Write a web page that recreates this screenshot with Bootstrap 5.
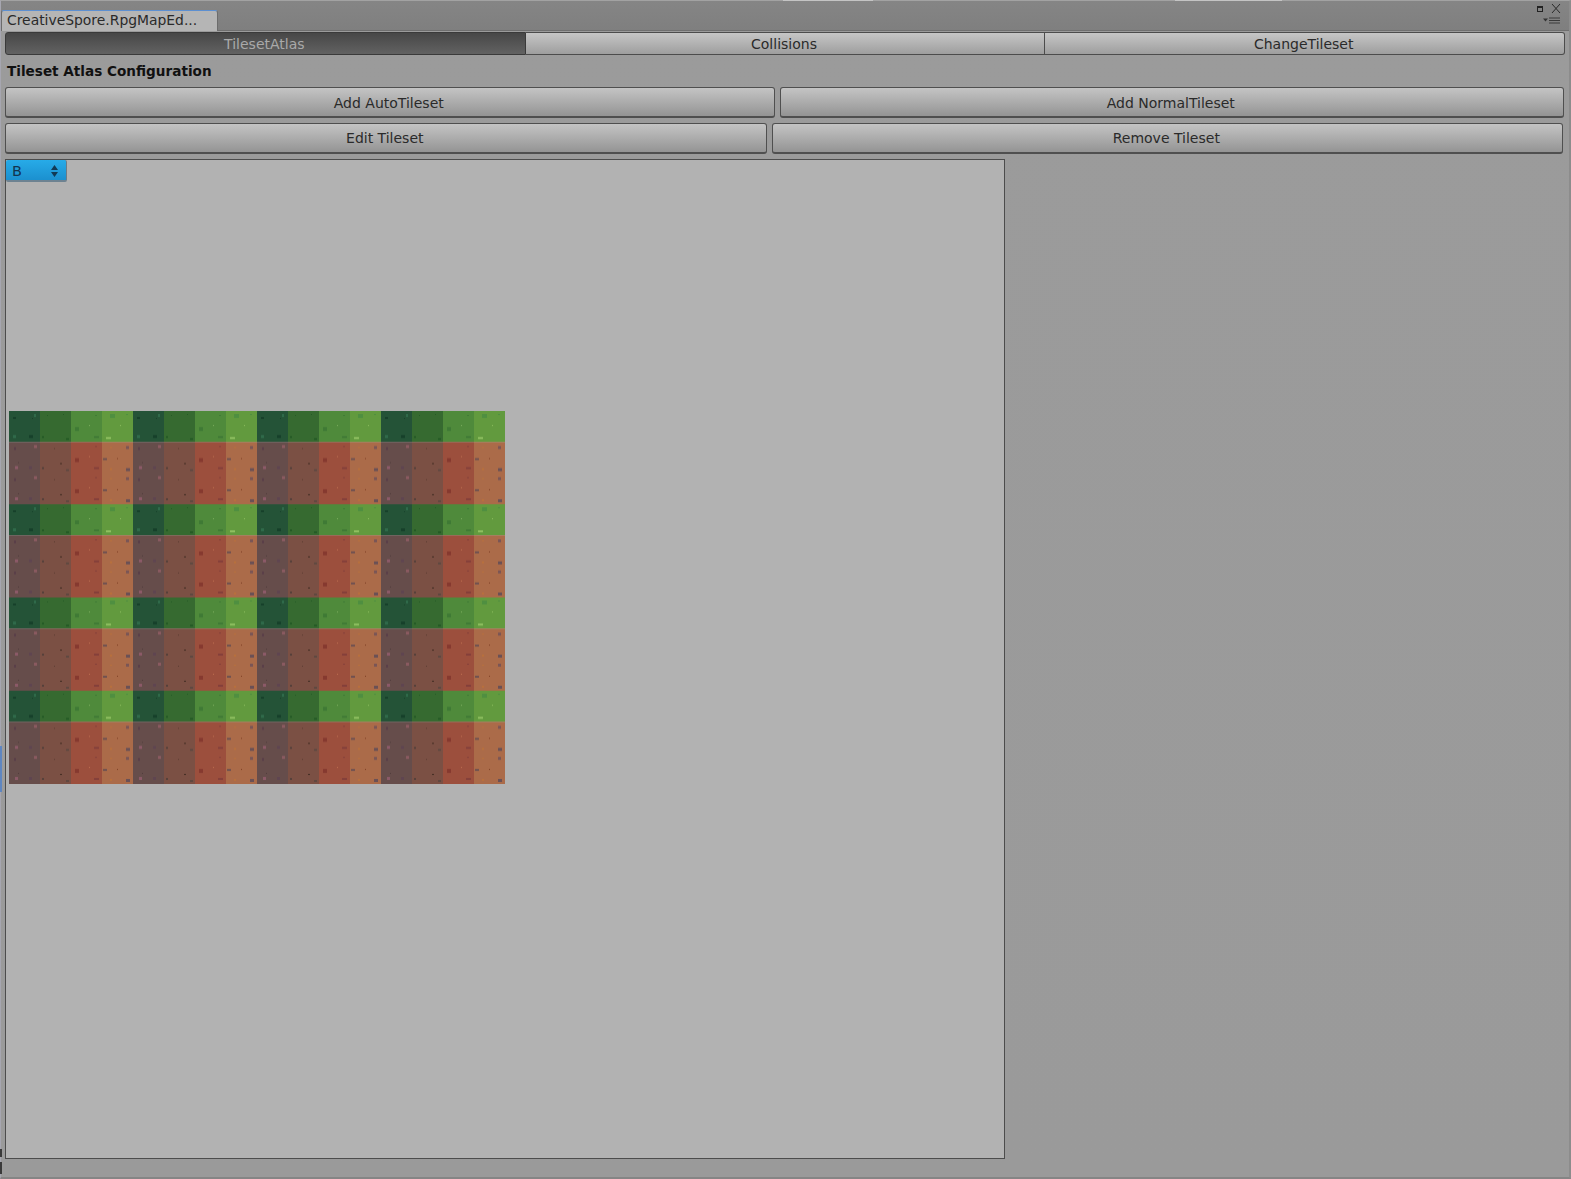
<!DOCTYPE html>
<html lang="en">
<head>
<meta charset="utf-8">
<title>CreativeSpore.RpgMapEditor</title>
<link href="https://cdn.jsdelivr.net/npm/bootstrap@5.3.0/dist/css/bootstrap.min.css" rel="stylesheet">
<style>
html,body{margin:0;height:100%;background:#9a9a9a}
body{font-family:"DejaVu Sans",sans-serif;font-size:14px;color:#1c1c1c;overflow:hidden}
.editor-win{width:1571px;height:1179px;position:relative;border-top:1px solid #a2a2a2;border-left:1px solid #a6a6b0;border-right:2px solid #8c8c8c;border-bottom:2px solid #858585;background:linear-gradient(#9b9b9b,#9a9a9a)}
.behind-bit{position:absolute;top:-1px;height:1px;background:#c4c4c4}
.bit-a{left:782px;width:90px}.bit-b{left:1174px;width:107px}
.side-bit{position:absolute;left:-1px;width:2px}
.side-a{top:745px;height:46px;background:#5f86c0}
.side-b{top:1148px;height:8px;background:#3a3a3a}
.side-c{top:1161px;height:12px;background:#3a3a3a}
.dock-bar{height:30px;background:linear-gradient(#858585,#7f7f7f);border-bottom:1px solid #6f6f6f}
.dock-tab{width:217px;height:21px;margin-top:9px;padding:0 0 0 5px;background:#b5b5b5;border:1px solid #6c6c6c;border-top:1px solid #5d8fd0;border-bottom:0;border-radius:3px 3px 0 0;line-height:19px;font-size:13.9px;color:#2a2a2a;white-space:nowrap}
.win-ctrl{width:26px;margin:2px 8px 0 0;gap:3px}
.tab-strip{height:23px;margin:1px 4px 0 4px}
.seg-btn,.seg-btn:hover{flex:1 1 0;padding:1px 2px 0 0;height:23px;font:14px/21px "DejaVu Sans",sans-serif;color:#2a2a2a;background:linear-gradient(#c6c6c6,#9e9e9e);border:1px solid #4c4c4c;border-left-width:0;border-radius:0}
.seg-btn:first-child{border-left-width:1px;border-radius:3px 0 0 3px}
.seg-btn:last-child{border-radius:0 3px 3px 0}
.seg-btn.seg-on,.seg-btn.seg-on:hover{color:#a9a9a9;background:linear-gradient(#474747,#626262);border-color:#3a3a3a}
.atlas-title{font-weight:700;font-size:13.6px;line-height:17px;color:#111;margin:8px 0 7px 6px}
.tool-row{gap:5px;margin:0 5px 5px 4px}
.tool-row-a .act-btn{padding-top:2px}
.tool-row-b{margin-right:6px;margin-bottom:5px}
.act-btn,.act-btn:hover{padding:1px 2px 0 0;height:31px;font:14px/27px "DejaVu Sans",sans-serif;color:#2a2a2a;background:linear-gradient(#c4c4c4,#949494);border:1px solid #4f4f4f;border-bottom-width:2px;border-radius:3px}
.w-auto-t{flex:769 1 0}.w-norm-t{flex:784 1 0}
.w-edit-t{flex:762 1 0}.w-rem-t{flex:792 1 0}
.atlas-box{position:relative;width:1000px;height:1000px;margin-left:4px;background:#b2b2b2;border:1px solid #4c4c4c;padding:251px 0 0 3px}
.atlas-box svg{display:block}
.atlas-pick,.atlas-pick:hover{position:absolute;left:0;top:0;width:61px;height:22px;padding:1px 8px 0 6px;font:14.5px/20px "DejaVu Sans",sans-serif;color:#12344f;background:linear-gradient(#27abe8,#1b90cf);border:0;border-bottom:2px solid #6d8291;border-right:1px solid #6d7b85;border-radius:2px}
</style>
</head>
<body>
<div class="editor-win">
  <span class="behind-bit bit-a"></span><span class="behind-bit bit-b"></span>
  <span class="side-bit side-a"></span><span class="side-bit side-b"></span><span class="side-bit side-c"></span>

  <div class="dock-bar d-flex justify-content-between">
    <div class="dock-tab">CreativeSpore.RpgMapEd...</div>
    <div class="win-ctrl d-flex flex-column align-items-end">
      <svg width="24" height="11" viewBox="0 0 24 11" aria-hidden="true">
        <rect x="0.5" y="3.5" width="5" height="5" fill="none" stroke="#222" stroke-width="1"/>
        <rect x="0.5" y="3.5" width="5" height="1.5" fill="#222"/>
        <path d="M15 1 L23 10 M23 1 L15 10" stroke="#2b2b2b" stroke-width="1" fill="none"/>
      </svg>
      <svg width="18" height="7" viewBox="0 0 18 7" aria-hidden="true">
        <path d="M0 1.5 H5 L2.5 4.5 Z" fill="#333"/>
        <path d="M6 1 H17 M6 3.5 H17 M6 6 H17" stroke="#3a3a3a" stroke-width="1" fill="none"/>
      </svg>
    </div>
  </div>

  <div class="tab-strip d-flex">
    <button type="button" class="btn seg-btn seg-on">TilesetAtlas</button>
    <button type="button" class="btn seg-btn">Collisions</button>
    <button type="button" class="btn seg-btn">ChangeTileset</button>
  </div>

  <div class="atlas-title">Tileset Atlas Configuration</div>

  <div class="tool-row tool-row-a d-flex">
    <button type="button" class="btn act-btn w-auto-t">Add AutoTileset</button>
    <button type="button" class="btn act-btn w-norm-t">Add NormalTileset</button>
  </div>
  <div class="tool-row tool-row-b d-flex">
    <button type="button" class="btn act-btn w-edit-t">Edit Tileset</button>
    <button type="button" class="btn act-btn w-rem-t">Remove Tileset</button>
  </div>

  <div class="atlas-box">
    <button type="button" class="btn atlas-pick d-flex justify-content-between align-items-center">B
      <svg width="7" height="12" viewBox="0 0 7 12" aria-hidden="true"><path d="M3.5 0 L7 5 H0 Z M0 7 H7 L3.5 12 Z" fill="#123a55"/></svg>
    </button>
    <svg width="496" height="373" viewBox="0 0 496 372" preserveAspectRatio="none" role="img" aria-label="Tileset atlas">
      <defs>
        <pattern id="tileBlock" width="124" height="93" patternUnits="userSpaceOnUse">
          <rect x="0" y="0" width="31" height="31" fill="#245337"/>
          <rect x="31" y="0" width="31" height="31" fill="#366a30"/>
          <rect x="62" y="0" width="31" height="31" fill="#4f8a3b"/>
          <rect x="93" y="0" width="31" height="31" fill="#629a3e"/>
          <rect x="0" y="31" width="31" height="62" fill="#664d4b"/>
          <rect x="31" y="31" width="31" height="62" fill="#7b5044"/>
          <rect x="62" y="31" width="31" height="62" fill="#9c4f3d"/>
          <rect x="93" y="31" width="31" height="62" fill="#ab6b49"/>
          <g fill="#16402a"><rect x="4" y="6" width="3" height="2"/><rect x="23" y="7" width="1" height="1"/><rect x="20" y="24" width="4" height="3"/></g>
          <g fill="#2f6a4a"><rect x="25" y="3" width="2" height="3"/><rect x="4" y="24" width="3" height="3"/></g>
          <g fill="#245a25"><rect x="38" y="4" width="1" height="1"/><rect x="54" y="3" width="1" height="1"/><rect x="33" y="25" width="2" height="2"/><rect x="57" y="27" width="3" height="2"/></g>
          <g fill="#3f7a35"><rect x="86" y="4" width="2" height="1"/><rect x="66" y="16" width="4" height="4"/><rect x="85" y="25" width="5" height="2"/></g>
          <rect x="80" y="14" width="1" height="1" fill="#7fb060"/>
          <g fill="#4f8f40"><rect x="101" y="3" width="5" height="4"/><rect x="117" y="3" width="2" height="1"/></g>
          <rect x="97" y="26" width="5" height="2" fill="#8fc060"/>
          <rect x="111" y="14" width="1" height="1" fill="#90c060"/>
          <g id="brownSpecks">
            <rect x="5" y="36" width="2" height="3" fill="#5a3f48"/>
            <rect x="25" y="34" width="3" height="3" fill="#8a5a60"/>
            <rect x="6" y="55" width="3" height="3" fill="#8c5a68"/>
            <rect x="20" y="55" width="3" height="3" fill="#5f4550"/>
            <rect x="9" y="51" width="1" height="1" fill="#4f3a3a"/>
            <rect x="51" y="52" width="2" height="1" fill="#3f2a20"/>
            <rect x="33" y="56" width="2" height="2" fill="#55403a"/>
            <rect x="57" y="58" width="3" height="2" fill="#5f4840"/>
            <rect x="45" y="37" width="1" height="1" fill="#5a3a30"/>
            <rect x="66" y="47" width="4" height="4" fill="#86392f"/>
            <rect x="85" y="56" width="5" height="2" fill="#843f3a"/>
            <rect x="86" y="35" width="2" height="1" fill="#843f3a"/>
            <rect x="80" y="45" width="1" height="1" fill="#c07050"/>
            <rect x="117" y="35" width="3" height="3" fill="#7a5555"/>
            <rect x="94" y="47" width="4" height="2" fill="#6f5050"/>
            <rect x="117" y="57" width="4" height="3" fill="#6a5055"/>
            <rect x="101" y="57" width="2" height="2" fill="#b8703c"/>
            <rect x="101" y="36" width="2" height="1" fill="#b8703c"/>
            <rect x="108" y="47" width="1" height="1" fill="#7a3a20"/>
          </g>
          <use href="#brownSpecks" y="31"/>
        </pattern>
      </defs>
      <rect width="496" height="372" fill="url(#tileBlock)"/>
    </svg>
  </div>
</div>
<script src="https://cdn.jsdelivr.net/npm/bootstrap@5.3.0/dist/js/bootstrap.bundle.min.js"></script>
</body>
</html>
